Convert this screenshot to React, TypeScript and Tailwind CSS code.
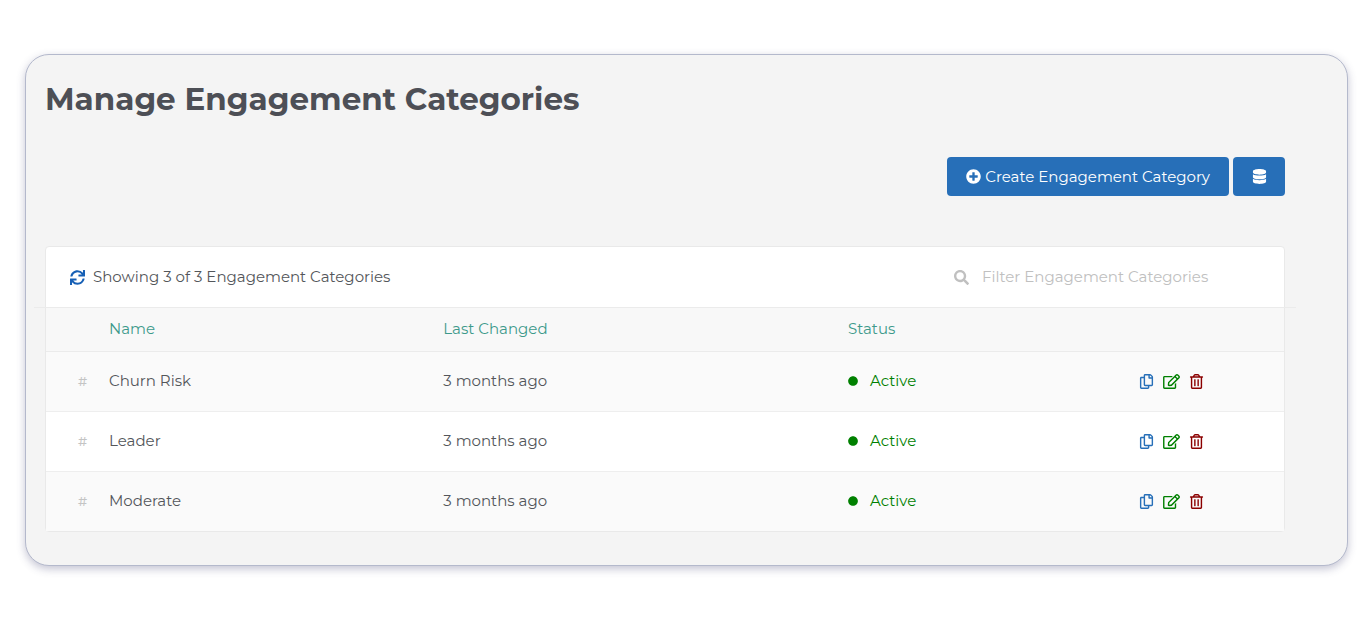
import { useState } from "react";
import {
  FaCircle,
  FaDatabase,
  FaPlusCircle,
  FaRegCopy,
  FaRegEdit,
  FaRegTrashAlt,
  FaSearch,
  FaSync,
} from "react-icons/fa";

type Category = {
  id: number;
  name: string;
  lastChanged: string;
  status: string;
};

const categories: Category[] = [
  { id: 1, name: "Churn Risk", lastChanged: "3 months ago", status: "Active" },
  { id: 2, name: "Leader", lastChanged: "3 months ago", status: "Active" },
  { id: 3, name: "Moderate", lastChanged: "3 months ago", status: "Active" },
];

// ── Row actions ────────────────────────────────────────────

function RowActions({ name }: { name: string }) {
  return (
    <div className="flex items-center gap-[9px]">
      <button type="button" aria-label={`Copy ${name}`} className="text-[#276fb8]">
        <FaRegCopy className="h-[15px] w-[15px]" />
      </button>
      <button type="button" aria-label={`Edit ${name}`} className="text-[#008000]">
        <FaRegEdit className="h-[15px] w-[17px]" />
      </button>
      <button type="button" aria-label={`Delete ${name}`} className="text-[#8b0000]">
        <FaRegTrashAlt className="h-[15px] w-[15px]" />
      </button>
    </div>
  );
}

// ── Category table ─────────────────────────────────────────

function CategoryTable({ rows }: { rows: Category[] }) {
  return (
    <table className="w-full table-fixed text-left">
      <colgroup>
        <col className="w-[63px]" />
        <col className="w-[27%]" />
        <col />
        <col className="w-[291px]" />
        <col className="w-[145px]" />
      </colgroup>
      <thead>
        <tr className="h-[43px] border-b border-[#ebebeb] bg-[#f8f8f8] text-[#3d9a8b]">
          <th aria-label="Order" />
          <th className="font-normal">Name</th>
          <th className="font-normal">Last Changed</th>
          <th className="font-normal">Status</th>
          <th aria-label="Actions" />
        </tr>
      </thead>
      <tbody>
        {rows.map((row) => (
          <tr
            key={row.id}
            className="h-[60px] border-b border-[#eeeeee] last:border-b-0 odd:bg-[#fafafa]"
          >
            <td className="pl-8 text-[13px] font-medium text-[#c4c4c4]">#</td>
            <td>{row.name}</td>
            <td>{row.lastChanged}</td>
            <td className="text-[#008000]">
              <span className="flex items-center gap-3">
                <FaCircle className="h-[10px] w-[10px]" />
                {row.status}
              </span>
            </td>
            <td>
              <RowActions name={row.name} />
            </td>
          </tr>
        ))}
      </tbody>
    </table>
  );
}

export default function App() {
  const [filter, setFilter] = useState("");
  const rows = categories.filter((c) =>
    c.name.toLowerCase().includes(filter.toLowerCase())
  );

  return (
    <div className="min-h-screen bg-white pt-[54px] pr-[18px] pb-16 pl-[25px] font-[Montserrat,Inter,sans-serif] text-[15px] leading-6 text-[#53565a]">
      <main className="rounded-3xl border border-[#b4b9cc] bg-[#f4f4f4] pt-6 pr-[62px] pb-[33px] pl-[19px] shadow-[0_3px_8px_rgba(60,60,110,0.3)]">
        <h1 className="text-[31px] leading-10 font-bold text-[#4d4f56]">
          Manage Engagement Categories
        </h1>

        <div className="mt-[38px] flex justify-end gap-1 text-white">
          <button
            type="button"
            className="flex h-[39px] items-center gap-1 rounded bg-[#276fb8] px-[19px]"
          >
            <FaPlusCircle className="h-[15px] w-[15px]" />
            Create Engagement Category
          </button>
          <button
            type="button"
            aria-label="Data source"
            className="flex h-[39px] w-[52px] items-center justify-center rounded bg-[#276fb8]"
          >
            <FaDatabase className="h-[15px] w-[15px]" />
          </button>
        </div>

        <section className="mt-[50px] rounded border border-[#e9e9e9] bg-white">
          <div className="flex h-[60px] items-center justify-between px-6">
            <div className="flex items-center gap-2">
              <button type="button" aria-label="Refresh" className="text-[#1760b5]">
                <FaSync className="h-[15px] w-[15px]" />
              </button>
              <p>
                Showing {rows.length} of {categories.length} Engagement Categories
              </p>
            </div>
            <label className="flex items-center gap-[13px] text-[#c0c0c0]">
              <FaSearch className="h-[15px] w-[15px]" aria-label="Filter" />
              <input
                type="text"
                value={filter}
                onChange={(e) => setFilter(e.target.value)}
                placeholder="Filter Engagement Categories"
                className="w-[278px] bg-transparent text-[#53565a] outline-none placeholder:text-[#c0c0c0]"
              />
            </label>
          </div>
          {/* rule runs a little past both panel edges */}
          <hr className="-mx-3 border-[#ebebeb]" />
          <CategoryTable rows={rows} />
        </section>
      </main>
    </div>
  );
}
